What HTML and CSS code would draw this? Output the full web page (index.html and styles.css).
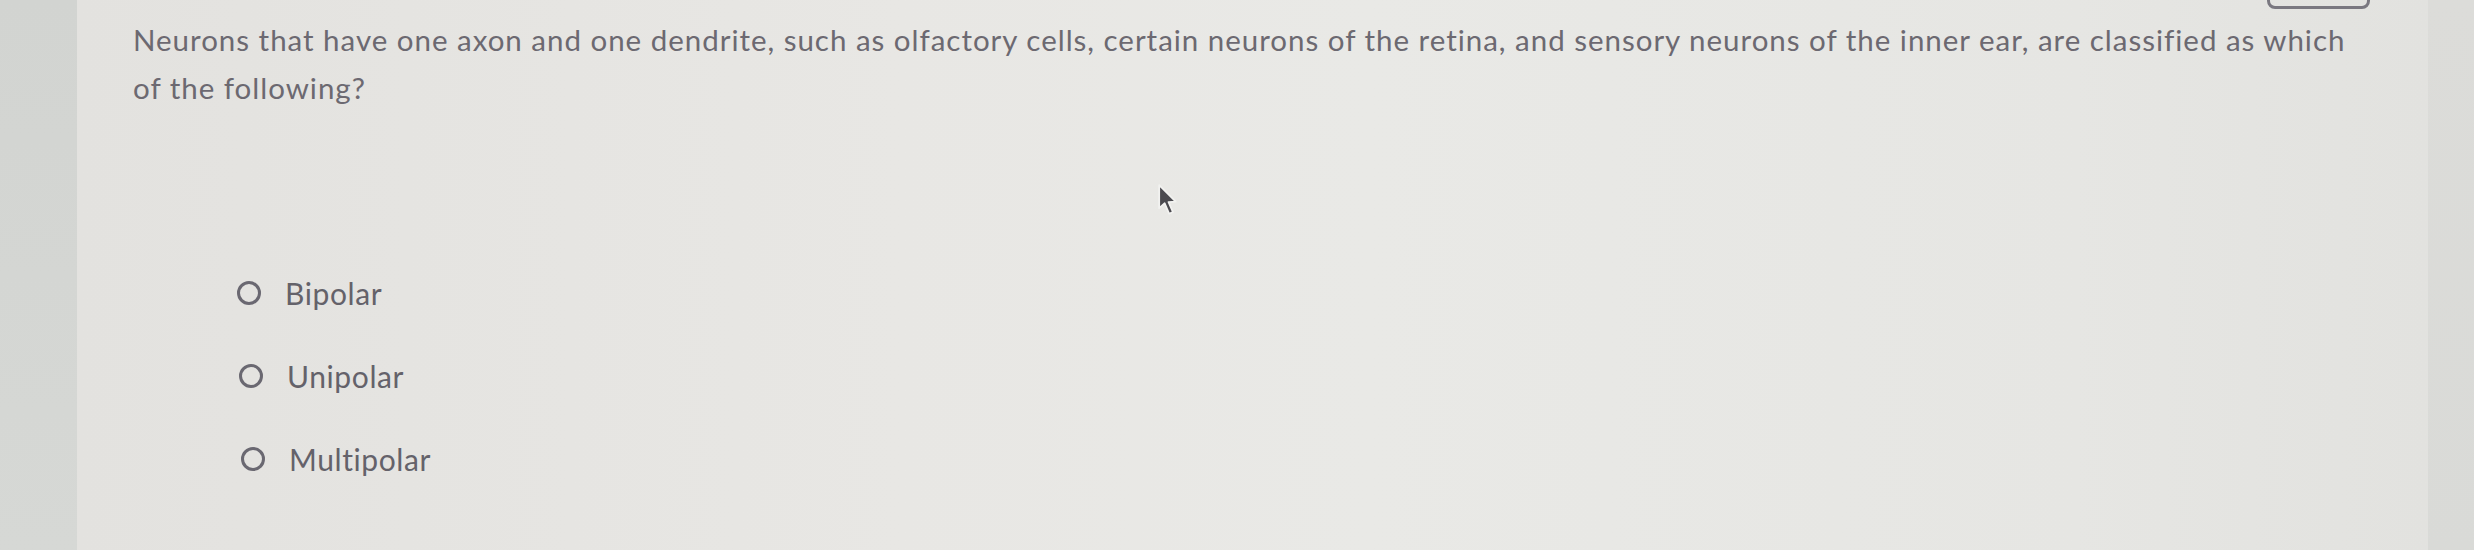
FILE: index.html
```html
<!DOCTYPE html>
<html lang="en">
<head>
<meta charset="utf-8">
<title>Question</title>
<link rel="stylesheet" href="styles.css">
</head>
<body>
<div class="screen">
  <div class="strip-left"></div>
  <main class="panel">
    <div class="toolbar"><span class="btn"></span></div>
    <p class="question">Neurons that have one axon and one dendrite, such as olfactory cells, certain neurons of the retina, and sensory neurons of the inner ear, are classified as which of the following?</p>
    <ul class="options">
      <li class="option"><span class="radio"></span><span class="label">Bipolar</span></li>
      <li class="option shift1"><span class="radio"></span><span class="label">Unipolar</span></li>
      <li class="option shift2"><span class="radio"></span><span class="label">Multipolar</span></li>
    </ul>
    <svg class="cursor" width="22" height="33" viewBox="0 0 20 30"><path d="M2 1 L2 22 L7 17.5 L11 27 L14.5 25.5 L10.5 16.5 L17 16 Z" fill="#4b4a4f" stroke="#f2f2f0" stroke-width="1.6" stroke-linejoin="round"/></svg>
  </main>
  <div class="strip-right"></div>
</div>
</body>
</html>
```
FILE: styles.css
```css
html, body {
  margin: 0;
  padding: 0;
  height: 550px;
  overflow: hidden;
  background: #d4d6d3;
}
.screen {
  display: flex;
  height: 550px;
}
.strip-left {
  width: 77px;
  background: linear-gradient(180deg, #d2d4d1 0%, #d6d8d5 100%);
}
.strip-right {
  width: 46px;
  background: linear-gradient(180deg, #dcdcd9 0%, #d9dad7 100%);
}
.panel {
  position: relative;
  flex: 1;
  background: linear-gradient(90deg, #e3e2df 0%, #e8e7e4 35%, #e9e9e6 55%, #e6e6e3 85%, #e2e2df 100%);
  padding: 0 0 0 56px;
  font-family: Lato, "Open Sans", sans-serif;
  color: #6c6971;
}
.toolbar {
  display: flex;
  justify-content: flex-end;
  height: 11px;
  margin-top: -35px;
  margin-bottom: 5px;
}
.btn {
  display: block;
  width: 97px;
  height: 38px;
  border: 3px solid #7a7880;
  border-radius: 8px;
  margin-right: 58px;
}
.question {
  margin: 0;
  padding-top: 35px;
  width: 2228px;
  font-size: 29.5px;
  letter-spacing: 0.98px;
  line-height: 48px;
}
.options {
  list-style: none;
  margin: 0;
  padding: 157px 0 0 104px;
}
.option {
  display: flex;
  align-items: center;
  gap: 24px;
  height: 83px;
  margin-top: -18px;
  margin-bottom: 18px;
  font-size: 30px;
  letter-spacing: 0.6px;
  color: #64626a;
}
.option.shift1 { padding-left: 2px; }
.option.shift2 { padding-left: 4px; }
.radio {
  display: block;
  width: 18px;
  height: 18px;
  border: 3.5px solid #6a6871;
  border-radius: 50%;
}
.cursor {
  position: absolute;
  left: 1080px;
  top: 184px;
}
```
